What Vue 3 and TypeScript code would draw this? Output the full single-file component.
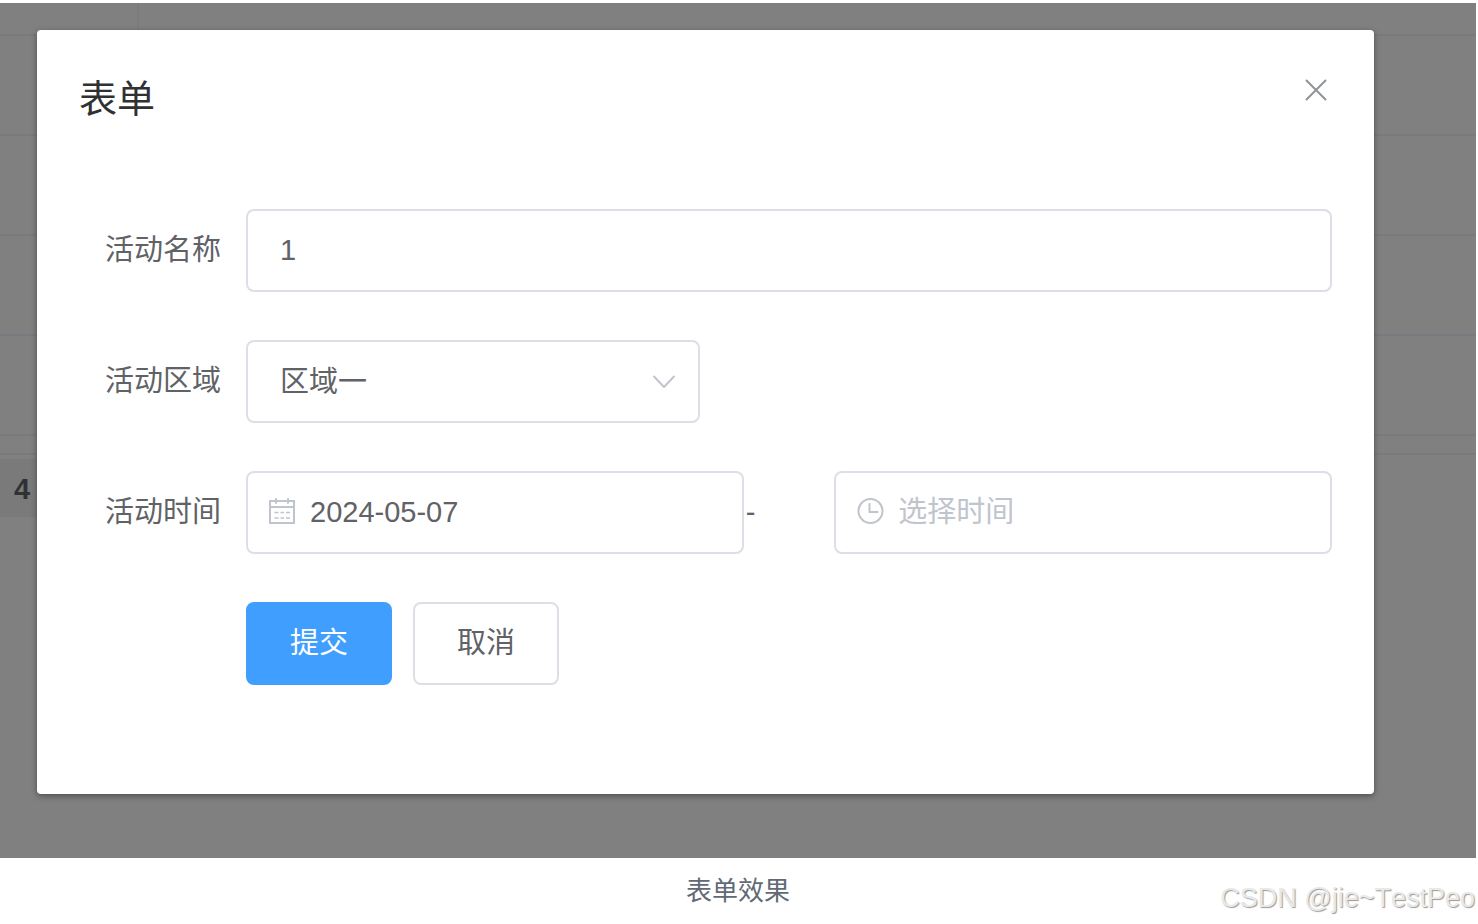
<script setup lang="ts">
import { ref } from 'vue'

interface Region {
  value: string
  label: string
}

const regions: Region[] = [{ value: 'area1', label: '区域一' }]
const name = ref('1')
const region = ref('area1')
const date = ref('2024-05-07')
const time = ref('')
const tableRows = [1, 2, 3, 4]
</script>

<template>
  <main class="page">
    <div class="scene">
      <div class="backdrop" aria-hidden="true">
        <div class="row row-head"><span class="cell"></span></div>
        <div v-for="row in tableRows" :key="row" class="row"></div>
        <div class="row row-foot"></div>
        <div class="pager">4</div>
      </div>

      <div class="overlay">
        <section class="dialog" role="dialog" aria-labelledby="dialog-title">
          <header class="header">
            <h1 id="dialog-title" class="title">表单</h1>
            <button class="close" type="button" aria-label="Close">
              <svg viewBox="0 0 24 24" width="24" height="24" fill="none" stroke="#909399" stroke-width="2" stroke-linecap="round">
                <path d="M2.5 2.5 21.5 21.5M21.5 2.5 2.5 21.5" />
              </svg>
            </button>
          </header>

          <form class="form" @submit.prevent>
            <div class="item">
              <label class="label" for="name">活动名称</label>
              <input id="name" v-model="name" class="control" type="text" />
            </div>

            <div class="item">
              <label class="label" for="region">活动区域</label>
              <div class="field field-select">
                <select id="region" v-model="region" class="control">
                  <option v-for="r in regions" :key="r.value" :value="r.value">{{ r.label }}</option>
                </select>
                <svg class="arrow" viewBox="0 0 24 14" width="24" height="14" fill="none" stroke="#c0c4cc" stroke-width="2" stroke-linecap="round" stroke-linejoin="round">
                  <path d="M2 1.5 12 12 22 1.5" />
                </svg>
              </div>
            </div>

            <div class="item">
              <label class="label" for="date">活动时间</label>
              <div class="range">
                <div class="field">
                  <svg class="prefix" viewBox="0 0 28 28" width="28" height="28" fill="none" stroke="#c0c4cc" stroke-width="2">
                    <path d="M2 4H26V26H2ZM2 10H26" />
                    <path d="M8 2V6M20 2V6" stroke-linecap="round" />
                    <path d="M6.500 15.500H10.500M12.500 15.500H16M18 15.500H22M6.500 21H10.500M12.500 21H16M18 21H22" stroke-width="1.600" />
                  </svg>
                  <input id="date" v-model="date" class="control with-icon" type="text" />
                </div>
                <span class="dash">-</span>
                <div class="field">
                  <svg class="prefix" viewBox="0 0 28 28" width="28" height="28" fill="none" stroke="#c0c4cc" stroke-width="2">
                    <circle cx="14.500" cy="14" r="12" />
                    <path d="M13.500 7V15H21.500" stroke-linecap="round" stroke-linejoin="round" />
                  </svg>
                  <input v-model="time" class="control with-icon" type="text" placeholder="选择时间" aria-label="选择时间" />
                </div>
              </div>
            </div>

            <div class="actions">
              <button class="btn primary" type="submit">提交</button>
              <button class="btn" type="button">取消</button>
            </div>
          </form>
        </section>
      </div>
    </div>

    <footer class="footer">
      <p class="caption">表单效果</p>
      <span class="watermark">CSDN @jie~TestPeo</span>
    </footer>
  </main>
</template>

<style>
body {
  background: #fff;
  overflow: hidden;
}
</style>

<style scoped>
.page,
.page * {
  box-sizing: border-box;
}

.page {
  padding-top: 3px;
  font-family: 'Liberation Sans', 'Noto Sans CJK SC', sans-serif;
  font-size: 29px;
  color: #606266;
}

.scene {
  display: grid;
  margin-right: 2px;
  background: #808080;
}

.backdrop,
.overlay {
  grid-area: 1 / 1;
  min-width: 0;
}

.row {
  height: 100px;
  border-bottom: 2px solid #797980;
}

.row-head {
  height: 33px;
}

.cell {
  display: block;
  width: 139px;
  height: 100%;
  border-right: 2px solid #7b7b80;
}

.row-foot {
  height: 19px;
}

.pager {
  width: 44px;
  height: 58px;
  margin-top: 4px;
  background: #7a7a7b;
  color: #303133;
  font-weight: 700;
  line-height: 60px;
  text-align: center;
}

.overlay {
  padding: 27px 102px 64px 37px;
}

.dialog {
  position: relative;
  padding: 42px 42px 109px;
  border-radius: 4px;
  background: #fff;
  box-shadow: 0 2px 6px rgba(0, 0, 0, 0.4);
}

.header {
  display: flex;
  justify-content: space-between;
  align-items: flex-start;
}

.title {
  margin: 0;
  color: #303133;
  font-size: 38px;
  font-weight: 400;
  line-height: 54px;
}

.close {
  display: flex;
  margin: 0;
  padding: 6px 4px;
  border: 0;
  background: none;
}

.form {
  display: flex;
  flex-direction: column;
  gap: 48px;
  margin-top: 83px;
}

.item {
  display: grid;
  grid-template-columns: 142px minmax(0, 1fr);
  gap: 25px;
}

.label {
  height: 83px;
  line-height: 83px;
  text-align: right;
  white-space: nowrap;
}

.field {
  position: relative;
}

.field-select {
  width: 454px;
}

.control {
  display: block;
  width: 100%;
  height: 83px;
  margin: 0;
  padding: 0 32px;
  border: 2px solid #dcdfe6;
  border-radius: 8px;
  outline: 0;
  background: #fff;
  color: #606266;
  font: inherit;
  appearance: none;
}

.control::placeholder {
  color: #c0c4cc;
  opacity: 1;
}

.with-icon {
  padding-left: 62px;
}

.prefix {
  position: absolute;
  top: 26px;
  left: 22px;
}

.arrow {
  position: absolute;
  top: 35px;
  right: 24px;
  pointer-events: none;
}

.range {
  display: grid;
  grid-template-columns: 11fr 2fr 11fr;
  align-items: center;
}

.dash {
  padding-left: 2px;
}

.actions {
  display: flex;
  gap: 21px;
  padding-left: 167px;
}

.btn {
  width: 146px;
  height: 83px;
  padding: 0;
  border: 2px solid #dcdfe6;
  border-radius: 8px;
  background: #fff;
  color: #606266;
  font: inherit;
  line-height: 79px;
}

.primary {
  border-color: #409eff;
  background: #409eff;
  color: #fff;
}

.footer {
  position: relative;
}

.caption {
  margin: 0;
  padding: 14px 2px 14px 0;
  color: #626a76;
  font-size: 26px;
  line-height: 38px;
  text-align: center;
}

.watermark {
  position: absolute;
  right: 3px;
  bottom: 10px;
  color: #e9e9e9;
  font-size: 27px;
  font-kerning: none;
  line-height: 32px;
  text-shadow: 1px 1px 1px #999;
}
</style>
